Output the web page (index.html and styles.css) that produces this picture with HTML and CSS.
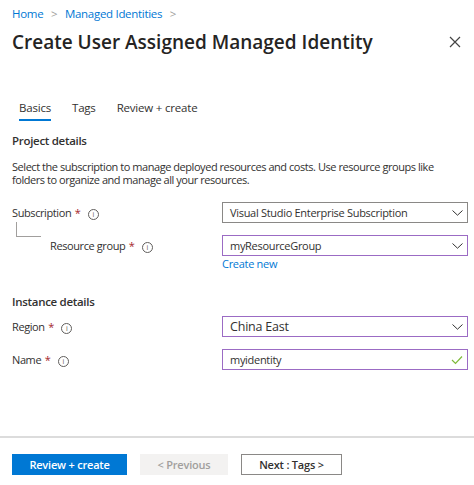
FILE: index.html
```html
<!DOCTYPE html>
<html lang="en">
<head>
    <meta charset="UTF-8">
    <title>Create User Assigned Managed Identity</title>
    <link rel="stylesheet" href="styles.css">
</head>
<body>
    <div class="pagina">
        <div class="breadcrumb">
            <a href="#">Home</a>
            <span class="sep">&gt;</span>
            <a href="#">Managed Identities</a>
            <span class="sep">&gt;</span>
        </div>
        <div class="cabecera">
            <h1>Create User Assigned Managed Identity</h1>
            <button class="cerrar" title="Close">
                <svg width="12" height="12" viewBox="0 0 12 12"><path d="M1 1 L11 11 M11 1 L1 11" stroke="#444" stroke-width="1.2" fill="none"/></svg>
            </button>
        </div>

        <!-- Pestañas -->
        <div class="tabs">
            <span class="tab activa">Basics</span>
            <span class="tab">Tags</span>
            <span class="tab">Review + create</span>
        </div>

        <h2>Project details</h2>
        <p class="descripcion">Select the subscription to manage deployed resources and costs. Use resource groups like folders to organize and manage all your resources.</p>

        <div class="fila primera">
            <div class="etiqueta">Subscription <span class="req">*</span> <span class="info">i</span></div>
            <div class="campo">
                <div class="select">Visual Studio Enterprise Subscription
                    <svg class="chevron" width="11" height="6" viewBox="0 0 11 6"><path d="M0.5 0.5 L5.5 5.2 L10.5 0.5" stroke="#323130" stroke-width="1" fill="none"/></svg>
                </div>
            </div>
        </div>
        <div class="fila fila-hija">
            <div class="arbol"></div>
            <div class="etiqueta">Resource group <span class="req">*</span> <span class="info">i</span></div>
            <div class="campo">
                <div class="select morado">myResourceGroup
                    <svg class="chevron" width="11" height="6" viewBox="0 0 11 6"><path d="M0.5 0.5 L5.5 5.2 L10.5 0.5" stroke="#323130" stroke-width="1" fill="none"/></svg>
                </div>
                <a href="#" class="crear">Create new</a>
            </div>
        </div>

        <h2 class="instancia">Instance details</h2>
        <div class="fila region">
            <div class="etiqueta">Region <span class="req">*</span> <span class="info">i</span></div>
            <div class="campo">
                <div class="select morado grande">China East
                    <svg class="chevron" width="11" height="6" viewBox="0 0 11 6"><path d="M0.5 0.5 L5.5 5.2 L10.5 0.5" stroke="#323130" stroke-width="1" fill="none"/></svg>
                </div>
            </div>
        </div>
        <div class="fila">
            <div class="etiqueta">Name <span class="req">*</span> <span class="info">i</span></div>
            <div class="campo">
                <div class="select morado">myidentity
                    <svg class="check" width="12" height="10" viewBox="0 0 12 10"><path d="M1 5 L4.5 8.5 L11 1.5" stroke="#7fba3a" stroke-width="1.2" fill="none"/></svg>
                </div>
            </div>
        </div>
    </div>

    <!-- Botones inferiores -->
    <div class="pie">
        <button class="btn primario">Review + create</button>
        <button class="btn deshabilitado">&lt; Previous</button>
        <button class="btn secundario">Next : Tags &gt;</button>
    </div>
</body>
</html>
```

FILE: styles.css
```css
body {
    font-family: "Open Sans", "Noto Sans", sans-serif;
    font-size: 11px;
    letter-spacing: -0.3px;
    color: #323130;
    margin: 0;
    background: #fff;
    width: 474px;
    height: 485px;
    position: relative;
    overflow: hidden;
}

.pagina {
    padding: 0 6px 0 12px;
}

.breadcrumb {
    padding-top: 6px;
    height: 16px;
    line-height: 16px;
    font-size: 11.5px;
}

.breadcrumb a {
    color: #0078d4;
    text-decoration: none;
}

.breadcrumb .sep {
    color: #a19f9d;
    margin: 0 5px;
}

.cabecera {
    display: flex;
    align-items: center;
    justify-content: space-between;
    margin-top: 7px;
    height: 26px;
}

h1 {
    margin: 0;
    font-size: 19px;
    font-weight: 600;
    color: #252423;
    letter-spacing: 0;
}

.cerrar {
    background: none;
    border: none;
    padding: 0;
    margin-right: 7px;
    width: 12px;
    height: 12px;
    display: flex;
}

.tabs {
    display: flex;
    gap: 21px;
    margin-top: 43px;
    padding-left: 7px;
    height: 23px;
}

.tab {
    line-height: 20px;
    font-size: 11.5px;
    letter-spacing: -0.2px;
}

.tab.activa {
    border-bottom: 2px solid #0078d4;
}

h2 {
    margin: 12px 0 0 0;
    font-size: 11.5px;
    font-weight: 600;
    line-height: 16px;
}

.descripcion {
    margin: 11px 0 0 0;
    line-height: 13px;
    font-size: 11px;
    letter-spacing: -0.45px;
    padding-right: 12px;
}

.fila {
    display: flex;
    align-items: flex-start;
    margin-top: 12px;
    position: relative;
}

.fila.primera {
    margin-top: 16px;
}

.fila.region {
    margin-top: 6px;
}

.fila-hija .etiqueta {
    padding-left: 38px;
    width: 172px;
}

.arbol {
    position: absolute;
    left: 4px;
    top: -13px;
    width: 24px;
    height: 14px;
    border-left: 1px solid #a19f9d;
    border-bottom: 1px solid #a19f9d;
}

.etiqueta {
    width: 210px;
    line-height: 21px;
    letter-spacing: -0.4px;
}

.req {
    color: #a4262c;
    margin-left: 1px;
}

.info {
    display: inline-flex;
    align-items: center;
    justify-content: center;
    width: 9px;
    height: 9px;
    border: 1px solid #605e5c;
    border-radius: 50%;
    font-size: 7px;
    line-height: 9px;
    color: #605e5c;
    margin-left: 5px;
    letter-spacing: 0;
}

.campo {
    width: 246px;
}

.select {
    height: 19px;
    border: 1px solid #8a8886;
    display: flex;
    align-items: center;
    justify-content: space-between;
    padding: 0 4px 0 7px;
    position: relative;
}

.select.morado {
    border-color: #9b6bc4;
}

.select.grande {
    font-size: 12.5px;
    letter-spacing: -0.2px;
}

.chevron {
    display: block;
}

.check {
    display: block;
}

.crear {
    display: block;
    color: #0078d4;
    text-decoration: none;
    line-height: 16px;
}

.instancia {
    margin-top: 22px;
}

.pie {
    position: absolute;
    left: 0;
    right: 0;
    bottom: 0;
    height: 47px;
    border-top: 2px solid #dcdcdc;
    display: flex;
    align-items: flex-start;
    gap: 13px;
    padding-left: 12px;
    padding-top: 0;
}

.btn {
    margin-top: 16px;
    height: 21px;
    font-family: "Open Sans", "Noto Sans", sans-serif;
    font-size: 11px;
    letter-spacing: -0.2px;
    font-weight: 600;
    border: none;
    padding: 0;
}

.primario {
    background: #0078d4;
    color: #fff;
    width: 115px;
}

.deshabilitado {
    background: #f3f2f1;
    color: #a19f9d;
    width: 88px;
}

.secundario {
    background: #fff;
    color: #323130;
    border: 1px solid #8a8886;
    width: 101px;
}
```
